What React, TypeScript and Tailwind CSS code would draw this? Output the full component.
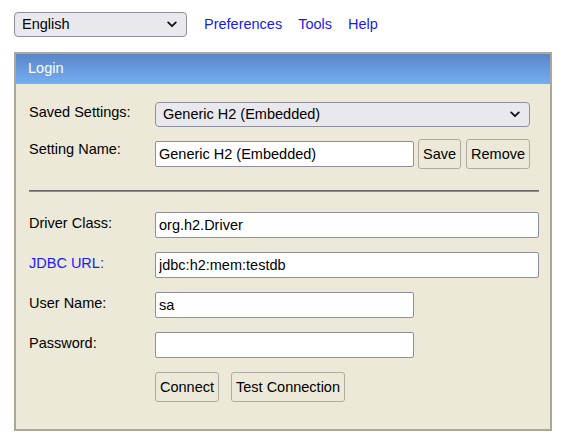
import type { ReactNode } from "react";

const font = { fontFamily: '"Liberation Sans", Arial, sans-serif' };

function Chevron() {
  return (
    <svg width="10" height="7" viewBox="0 0 10 7" className="shrink-0" aria-hidden>
      <path d="M1.2 1.4 L5 5.2 L8.8 1.4" fill="none" stroke="#111" strokeWidth="1.8" strokeLinecap="round" strokeLinejoin="round" />
    </svg>
  );
}

function FakeSelect({ value, className }: { value: string; className: string }) {
  return (
    <div className={`flex h-[25px] items-center justify-between rounded-[4px] border border-[#8f8f9d] bg-[#e9e9ed] pl-[7px] pr-[9px] text-[14.5px] leading-none text-black ${className}`}>
      <span>{value}</span>
      <Chevron />
    </div>
  );
}

function TextBox({ value, width, type = "text" }: { value: string; width: string; type?: string }) {
  return (
    <input
      readOnly
      type={type}
      value={value}
      style={font}
      className={`h-[26px] rounded-[2px] border border-[#8f8f9d] bg-white px-[3px] text-[14.5px] text-black outline-none ${width}`}
    />
  );
}

function Btn({ children }: { children: ReactNode }) {
  return (
    <button style={font} className="h-[30px] rounded-[3px] border border-[#aeaba0] bg-[#ece9d8] px-[4px] text-[14.5px] leading-none text-black">
      {children}
    </button>
  );
}

function Row({ label, blue, children, pt = "pt-[2px]" }: { label: string; blue?: boolean; children: ReactNode; pt?: string }) {
  return (
    <div className="flex items-start">
      <div className={`w-[126px] shrink-0 text-[14.5px] leading-[18px] ${pt} ${blue ? "text-[#1a1aff]" : "text-black"}`}>{label}</div>
      {children}
    </div>
  );
}

export default function App() {
  return (
    <div style={font} className="min-h-[446px] bg-white pl-[14px] pt-[12px]">
      <div className="flex items-center">
        <FakeSelect value="English" className="w-[173px]" />
        <nav className="ml-[17px] flex gap-[16px] text-[14.5px] text-[#1a1aee]">
          <a href="#">Preferences</a>
          <a href="#">Tools</a>
          <a href="#">Help</a>
        </nav>
      </div>

      <div className="mt-[15px] w-[538px] border-2 border-[#aba898] bg-[#ece9d8]">
        <div className="flex h-[30px] items-center bg-gradient-to-b from-[#5a86c8] to-[#74aff2] pl-[12px] text-[14.5px] text-white">Login</div>

        <div className="pl-[13px] pr-[11px] pb-[27px] pt-[18px]">
          <Row label="Saved Settings:" pt="pt-[1px]">
            <FakeSelect value="Generic H2 (Embedded)" className="w-[375px]" />
          </Row>

          <div className="mt-[12px]">
            <Row label="Setting Name:" pt="pt-[1px]">
              <div className="flex h-[30px] items-center">
                <TextBox value="Generic H2 (Embedded)" width="w-[259px]" />
                <div className="ml-[4px] flex gap-[5px]">
                  <Btn>Save</Btn>
                  <Btn>Remove</Btn>
                </div>
              </div>
            </Row>
          </div>

          <hr className="mt-[21px] border-0 border-t border-b border-t-[#676767] border-b-[#8c8c8c]" />

          <div className="mt-[20px] flex flex-col gap-[14px]">
            <Row label="Driver Class:">
              <TextBox value="org.h2.Driver" width="w-[384px]" />
            </Row>
            <Row label="JDBC URL:" blue>
              <TextBox value="jdbc:h2:mem:testdb" width="w-[384px]" />
            </Row>
            <Row label="User Name:">
              <TextBox value="sa" width="w-[259px]" />
            </Row>
            <Row label="Password:">
              <TextBox value="" type="password" width="w-[259px]" />
            </Row>
            <div className="flex pl-[126px] gap-[12px]">
              <Btn>Connect</Btn>
              <Btn>Test Connection</Btn>
            </div>
          </div>
        </div>
      </div>
    </div>
  );
}
